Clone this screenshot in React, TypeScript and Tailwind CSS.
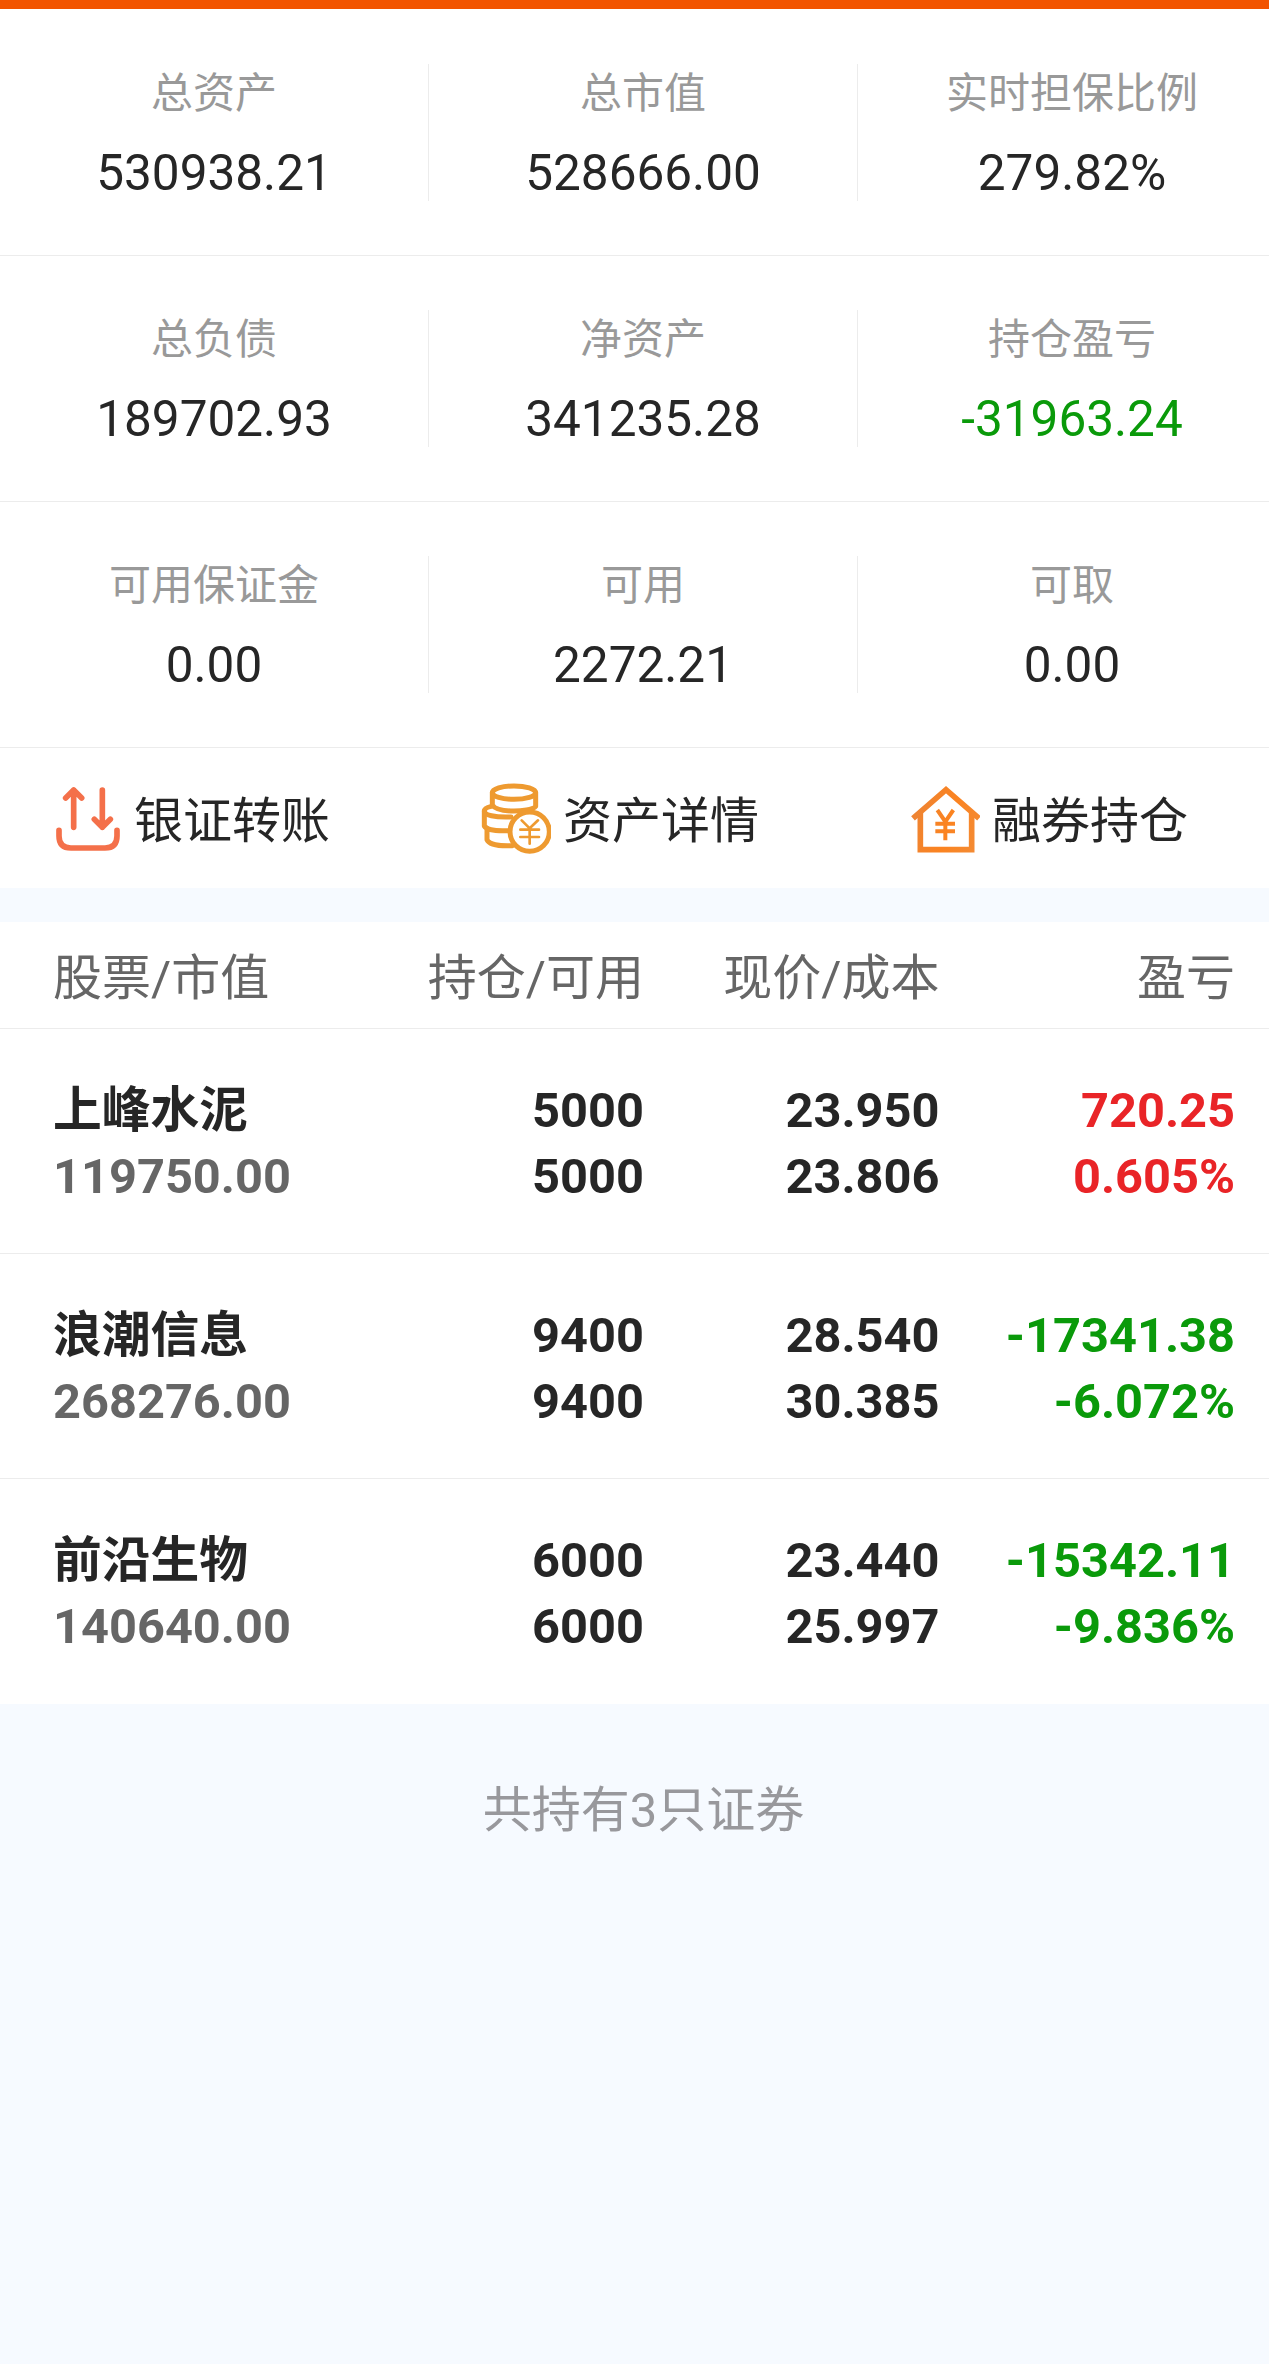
import React from 'react';

interface Metric {
  label: string;
  value: string;
  color?: string;
}

interface Holding {
  name: string;
  marketValue: string;
  amount: string;
  available: string;
  price: string;
  cost: string;
  profit: string;
  profitRate: string;
  color: string;
}

const metricRows: Metric[][] = [
  [
    { label: '总资产', value: '530938.21' },
    { label: '总市值', value: '528666.00' },
    { label: '实时担保比例', value: '279.82%' },
  ],
  [
    { label: '总负债', value: '189702.93' },
    { label: '净资产', value: '341235.28' },
    { label: '持仓盈亏', value: '-31963.24', color: 'text-[#0a9a0a]' },
  ],
  [
    { label: '可用保证金', value: '0.00' },
    { label: '可用', value: '2272.21' },
    { label: '可取', value: '0.00' },
  ],
];

const holdings: Holding[] = [
  { name: '上峰水泥', marketValue: '119750.00', amount: '5000', available: '5000', price: '23.950', cost: '23.806', profit: '720.25', profitRate: '0.605%', color: 'text-[#e92427]' },
  { name: '浪潮信息', marketValue: '268276.00', amount: '9400', available: '9400', price: '28.540', cost: '30.385', profit: '-17341.38', profitRate: '-6.072%', color: 'text-[#0a9a0a]' },
  { name: '前沿生物', marketValue: '140640.00', amount: '6000', available: '6000', price: '23.440', cost: '25.997', profit: '-15342.11', profitRate: '-9.836%', color: 'text-[#0a9a0a]' },
];

const TransferIcon = () => (
  <svg viewBox="30 120 216 222" className="h-[74px] w-[72px] shrink-0" fill="none" stroke="#f4704a" strokeWidth="17" strokeLinecap="round" strokeLinejoin="round">
    <path d="M57 268v17q0 36 36 36h102q36 0 36-36v-17" />
    <path d="M101 259V147M77 171l24-24 24 24" />
    <path d="M187 147v112M163 235l24 24 24-24" />
  </svg>
);

const CoinsIcon = () => (
  <svg viewBox="27 120 216 222" className="h-[74px] w-[72px] shrink-0" fill="none" stroke="#ee9a30" strokeWidth="15" strokeLinecap="round" strokeLinejoin="round">
    <ellipse cx="132" cy="155" rx="65" ry="20" />
    <path d="M67 156v36c10 16 45 18 65 18s58-4 65-14v-40" />
    <path d="M64 196c-14 3-21 8-21 14 0 12 30 20 80 18" />
    <path d="M43 210v45c8 12 35 16 74 14" />
    <path d="M51 262v34c6 14 35 20 76 18" />
    <circle cx="179" cy="272" r="59" fill="#fff" />
    <path strokeWidth="8" d="M155 238l24 24 25-24M151 266h56M151 288h56M179 262v46" />
  </svg>
);

const HouseIcon = () => (
  <svg viewBox="24 120 216 222" className="h-[74px] w-[72px] shrink-0" fill="none" stroke="url(#house)" strokeWidth="17">
    <defs>
      <linearGradient id="house" gradientUnits="userSpaceOnUse" x1="36" y1="240" x2="240" y2="300">
        <stop offset="0" stopColor="#ee8433" />
        <stop offset="0.5" stopColor="#fb8320" />
        <stop offset="1" stopColor="#f38b35" />
      </linearGradient>
    </defs>
    <path d="M39 232L138 146l99 86" />
    <path d="M61 216v110h154V216" />
    <path strokeWidth="12" d="M112 207l24 35 24-35M106 248h59M106 271h59M136 240v58" />
  </svg>
);

const actions = [
  { label: '银证转账', icon: <TransferIcon /> },
  { label: '资产详情', icon: <CoinsIcon /> },
  { label: '融券持仓', icon: <HouseIcon /> },
];

const MetricCell: React.FC<Metric> = ({ label, value, color = 'text-[#262626]' }) => (
  <div className="h-[137px] border-r border-[#ececec] pt-0.5 text-center">
    <div className="mb-[21px] text-[42px] leading-[56px] text-[#999]">{label}</div>
    <div className={`text-[49.5px] leading-[60px] ${color}`}>{value}</div>
  </div>
);

const HoldingRow: React.FC<{ item: Holding }> = ({ item }) => (
  <div className="grid h-[225px] grid-cols-4 content-center border-b border-[#ececec] pt-[5px] pr-[52px] pl-[53px] text-right text-[48.75px] leading-[66px] font-bold last:border-b-0">
    <div className="text-left">{item.name}</div>
    <div>{item.amount}</div>
    <div>{item.price}</div>
    <div className={item.color}>{item.profit}</div>
    <div className="text-left text-[#666]">{item.marketValue}</div>
    <div>{item.available}</div>
    <div>{item.cost}</div>
    <div className={item.color}>{item.profitRate}</div>
  </div>
);

export default function App() {
  return (
    <div className="h-[2364px] w-full overflow-hidden bg-[#f6faff] font-['Roboto','Noto_Sans_CJK_SC',sans-serif] text-[49px] text-[#262626]">
      {/* The content is slightly wider than the viewport and gets clipped on the right */}
      <div className="w-[1287px]">
        <div className="h-[9px] bg-[#f25400]" />

        <section className="bg-white pt-px">
          {metricRows.map((row, i) => (
            <div key={i} className="grid h-[246px] grid-cols-3 items-center border-b border-[#ececec]">
              {row.map((metric) => (
                <MetricCell key={metric.label} {...metric} />
              ))}
            </div>
          ))}
          <div className="grid h-[140px] grid-cols-3 items-center">
            {actions.map((action) => (
              <div key={action.label} className="-mt-px flex items-center gap-3 pl-[50px]">
                {action.icon}
                <span className="pt-2 leading-[68px]">{action.label}</span>
              </div>
            ))}
          </div>
        </section>

        <section className="mt-[34px] bg-white">
          <div className="grid h-[107px] grid-cols-4 items-center border-b border-[#ececec] pt-[7px] pr-[52px] pl-[53px] text-right leading-[66px] text-[#666]">
            <div className="text-left">股票/市值</div>
            <div>持仓/可用</div>
            <div>现价/成本</div>
            <div>盈亏</div>
          </div>
          <div>
            {holdings.map((item) => (
              <HoldingRow key={item.name} item={item} />
            ))}
          </div>
        </section>

        <div className="pt-[74px] text-center leading-[66px] text-[#98989c]">共持有3只证券</div>
      </div>
    </div>
  );
}
